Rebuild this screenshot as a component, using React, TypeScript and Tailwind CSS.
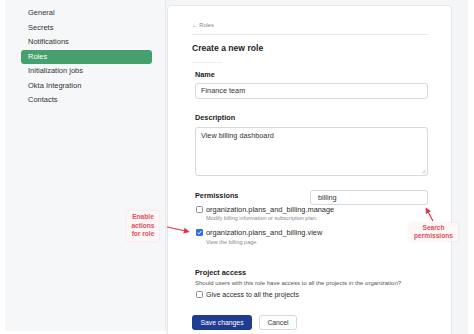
const navItems = [
  'General',
  'Secrets',
  'Notifications',
  'Roles',
  'Initialization jobs',
  'Okta Integration',
  'Contacts',
]

function Checkbox({ checked }: { checked?: boolean }) {
  if (checked) {
    return (
      <svg width="7" height="7" viewBox="0 0 7 7" className="shrink-0">
        <rect x="0" y="0" width="7" height="7" rx="1.2" fill="#2f6fe0" />
        <path d="M1.6 3.6 L2.9 4.9 L5.4 2.1" stroke="white" strokeWidth="1" fill="none" />
      </svg>
    )
  }
  return <div className="w-[7px] h-[7px] shrink-0 rounded-[1.5px] border border-[#8a8f98] bg-white" />
}

export default function App() {
  return (
    <div
      className="relative w-[474px] h-[334px] overflow-hidden bg-white flex pl-[5px]"
      style={{ fontFamily: '"Liberation Sans", Arial, sans-serif' }}
    >
      {/* sidebar */}
      <div className="w-[161px] h-[331px] bg-[#f6f7f9] border-r border-[#e9eaee] pt-[6px] pl-[16px] pr-[13px] flex flex-col">
        {navItems.map((item) =>
          item === 'Roles' ? (
            <div
              key={item}
              className="h-[14px] my-[0.3px] rounded-[3px] bg-[#45a06e] text-white text-[7.5px] leading-[14px] pl-[7px]"
            >
              {item}
            </div>
          ) : (
            <div key={item} className="h-[14.5px] leading-[14.5px] text-[7.5px] text-[#333] pl-[7px]">
              {item}
            </div>
          )
        )}
      </div>

      {/* main area */}
      <div className="w-[302px] h-full bg-[#f4f5f7] pt-[5px] pl-px">
        <div className="w-[285px] h-[340px] bg-white border border-[#e7e8eb] rounded-[4px] pl-[24px] pr-[23px] pt-[15px] flex flex-col">
          <div className="text-[5.7px] leading-[8px] text-[#888]">← Roles</div>
          <div className="mt-[5px] border-t border-[#e8e9ec]" />
          <div className="mt-[7px] text-[8.6px] leading-[12px] font-semibold text-[#222]">Create a new role</div>
          <div className="mt-[8px] w-[30px] border-t border-[#f0f0f2]" />

          <div className="pl-[3px] flex flex-col">
            <div className="mt-[7px] text-[7.3px] leading-[10px] font-bold text-[#222]">Name</div>
            <div className="mt-[3px] h-[16px] rounded-[3px] border border-[#d5d8dd] px-[5px] text-[7.3px] leading-[14px] text-[#333]">
              Finance team
            </div>

            <div className="mt-[14px] text-[7.3px] leading-[10px] font-bold text-[#222]">Description</div>
            <div className="relative mt-[4px] h-[49px] rounded-[3px] border border-[#d5d8dd] px-[5px] pt-[3px] text-[7.3px] leading-[9px] text-[#333]">
              View billing dashboard
              <svg width="5" height="5" viewBox="0 0 5 5" className="absolute right-[1px] bottom-[1px]">
                <path d="M4.5 1 L1 4.5 M4.5 3 L3 4.5" stroke="#999" strokeWidth="0.6" />
              </svg>
            </div>

            <div className="mt-[14px] flex justify-between items-start">
              <div className="mt-[1px] text-[7.3px] leading-[10px] font-bold text-[#222]">Permissions</div>
              <div className="w-[118px] h-[15px] rounded-[3px] border border-[#d5d8dd] px-[7px] text-[7.3px] leading-[13px] text-[#333]">
                billing
              </div>
            </div>

            <div className="flex items-center gap-[3px] h-[9px] text-[7.4px] leading-[9px] text-[#2a2a2a] pl-[1px]">
              <Checkbox />
              <span>organization.plans_and_billing.manage</span>
            </div>
            <div className="mt-[1px] pl-[11px] text-[5.5px] leading-[7px] text-[#888]">
              Modify billing information or subscription plan.
            </div>

            <div className="mt-[6px] flex items-center gap-[3px] h-[9px] text-[7.4px] leading-[9px] text-[#2a2a2a] pl-[1px]">
              <Checkbox checked />
              <span>organization.plans_and_billing.view</span>
            </div>
            <div className="mt-[2px] pl-[11px] text-[5.5px] leading-[7px] text-[#888]">View the billing page.</div>

            <div className="mt-[21.5px] text-[7.3px] leading-[10px] font-bold text-[#222]">Project access</div>
            <div className="mt-[2.5px] text-[6px] leading-[7px] text-[#555]">
              Should users with this role have access to all the projects in the organization?
            </div>
            <div className="mt-[3px] flex items-center gap-[3px] h-[9px] text-[7px] leading-[9px] text-[#2a2a2a] pl-[1px]">
              <Checkbox />
              <span>Give access to all the projects</span>
            </div>
          </div>

          <div className="mt-[15.5px] flex gap-[7px]">
            <div className="w-[60px] h-[15px] rounded-[3px] bg-[#1f3c91] text-white text-[6.8px] leading-[15px] text-center">
              Save changes
            </div>
            <div className="w-[38px] h-[15px] rounded-[3px] border border-[#d5d8dd] bg-white text-[#333] text-[6.8px] leading-[13px] text-center">
              Cancel
            </div>
          </div>
        </div>
      </div>

      {/* annotations */}
      <div className="absolute left-[127px] top-[211px] w-[32px] py-[2px] rounded-[3px] bg-[#fff6f6] shadow-[0_0_3px_rgba(220,80,90,0.15)] text-center text-[6.6px] leading-[8.5px] font-bold text-[#d9505f]">
        Enable
        <br />
        actions
        <br />
        for role
      </div>
      <div className="absolute left-[409px] top-[223px] w-[49px] py-[1px] rounded-[3px] bg-[#fff6f6] shadow-[0_0_3px_rgba(220,80,90,0.15)] text-center text-[6.6px] leading-[8px] font-bold text-[#d9505f]">
        Search
        <br />
        permissions
      </div>
      <svg width="474" height="334" className="absolute left-0 top-0 pointer-events-none">
        <defs>
          <marker id="ah" markerWidth="5" markerHeight="5" refX="3.5" refY="2.5" orient="auto">
            <path d="M0 0 L5 2.5 L0 5 Z" fill="#e03448" />
          </marker>
        </defs>
        <line x1="167" y1="227" x2="188" y2="231.5" stroke="#e03448" strokeWidth="1.2" markerEnd="url(#ah)" />
        <line x1="433" y1="221" x2="426.5" y2="209" stroke="#e03448" strokeWidth="1.2" markerEnd="url(#ah)" />
      </svg>
    </div>
  )
}
